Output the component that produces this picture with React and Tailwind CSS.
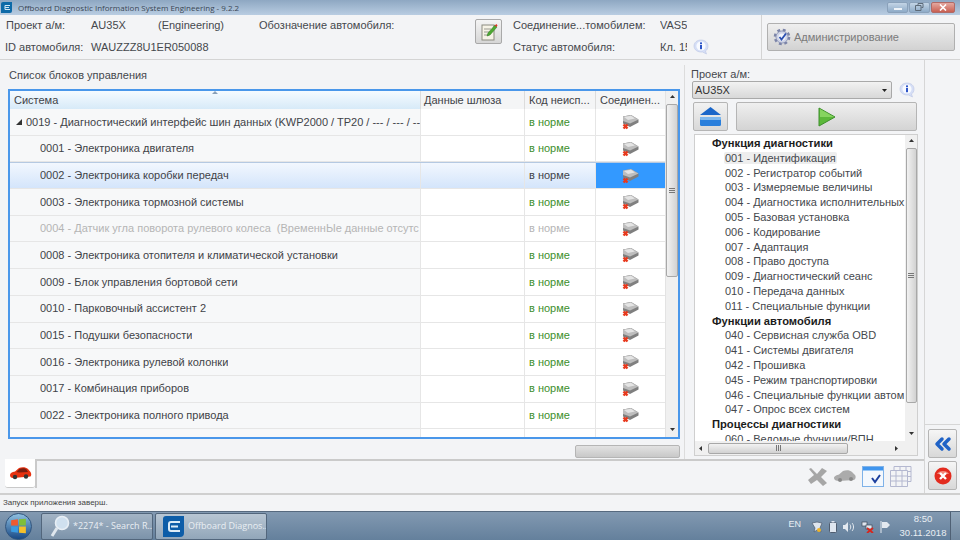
import { ChevronsLeft } from 'lucide-react';

const rows = [
  { name: '0019 - Диагностический интерфейс шин данных (KWP2000 / TP20 / --- / --- / ---', root: true },
  { name: '0001 - Электроника двигателя' },
  { name: '0002 - Электроника коробки передач', selected: true },
  { name: '0003 - Электроника тормозной системы' },
  { name: '0004 - Датчик угла поворота рулевого колеса  (ВременнЫе данные отсутс', disabled: true },
  { name: '0008 - Электроника отопителя и климатической установки' },
  { name: '0009 - Блок управления бортовой сети' },
  { name: '0010 - Парковочный ассистент 2' },
  { name: '0015 - Подушки безопасности' },
  { name: '0016 - Электроника рулевой колонки' },
  { name: '0017 - Комбинация приборов' },
  { name: '0022 - Электроника полного привода' },
  { name: '', partial: true },
];

const tree = [
  { label: 'Функция диагностики', bold: true },
  { label: '001 - Идентификация', active: true },
  { label: '002 - Регистратор событий' },
  { label: '003 - Измеряемые величины' },
  { label: '004 - Диагностика исполнительных' },
  { label: '005 - Базовая установка' },
  { label: '006 - Кодирование' },
  { label: '007 - Адаптация' },
  { label: '008 - Право доступа' },
  { label: '009 - Диагностический сеанс' },
  { label: '010 - Передача данных' },
  { label: '011 - Специальные функции' },
  { label: 'Функции автомобиля', bold: true },
  { label: '040 - Сервисная служба OBD' },
  { label: '041 - Системы двигателя' },
  { label: '042 - Прошивка' },
  { label: '045 - Режим транспортировки' },
  { label: '046 - Специальные функции автом' },
  { label: '047 - Опрос всех систем' },
  { label: 'Процессы диагностики', bold: true },
  { label: '060 - Ведомые функции/ВПН' },
];

function InfoIcon() {
  return (
    <svg width="16" height="16" viewBox="0 0 16 16">
      <path d="M8 1c4 0 7 2.500 7 6 0 2.500-1 4-2.500 5l1 3-4-2C5 13.500 1 11 1 7c0-3.500 3-6 7-6z" fill="#d5def6" stroke="#bcc6e4" strokeWidth=".6" />
      <circle cx="8" cy="7" r="4.600" fill="#f8faff" />
      <rect x="7" y="5.800" width="2" height="4.400" fill="#2d55c8" />
      <rect x="7" y="3.400" width="2" height="1.600" fill="#2d55c8" />
    </svg>
  );
}

function DriveIcon() {
  return (
    <svg width="17" height="16" viewBox="0 0 17 16">
      <path d="M1 2.500 9 1 16.500 5.500v3L8 13 1 9.500z" fill="#7f7f7f" />
      <path d="M1 2.500 9 1 16.500 5.500 8 9.500 1 7z" fill="#bdbdbd" />
      <path d="M2 3 9 1.800l4 2.700L6 6z" fill="#e4e4e4" />
      <path d="M1.500 10.500l4 4M5.500 10.500l-4 4" stroke="#e8391d" strokeWidth="2.400" />
    </svg>
  );
}

function EditIcon() {
  return (
    <svg width="20" height="20" viewBox="0 0 20 20">
      <rect x="3" y="3" width="12" height="15" fill="#f6f3e6" stroke="#8b8b80" />
      <path d="M5 7h7M5 10h6M5 13h5" stroke="#9a9a90" />
      <path d="M8 14l1-3 7-8 2 2-7 8z" fill="#4da832" stroke="#2f7a1e" strokeWidth=".5" />
      <path d="M15.500 3.500l2-1.500 1 1.500-1 1.500z" fill="#d83a2a" />
    </svg>
  );
}

function GearIcon() {
  return (
    <svg width="20" height="20" viewBox="0 0 20 20">
      <circle cx="10" cy="10" r="6.500" fill="#b9c0d6" stroke="#7b84a8" strokeWidth="3.600" strokeDasharray="2.600 2.500" />
      <circle cx="10" cy="10" r="6" fill="#cfd4e6" stroke="#8088aa" strokeWidth=".6" />
      <circle cx="10" cy="10" r="3.500" fill="#f2f4fb" />
      <path d="M7.500 10l2 2.500L14 6.500" fill="none" stroke="#2a4fb0" strokeWidth="1.800" />
    </svg>
  );
}

function ScrollArrow({ dir }) {
  const d = { up: 'M1 4 3.500 1 6 4z', down: 'M1 1h5L3.500 4z', left: 'M4 1v5L1 3.500z', right: 'M1 1v5l3-2.500z' }[dir];
  return (
    <svg width="7" height="7" viewBox="0 0 7 7">
      <path d={d} fill="#333" />
    </svg>
  );
}

function Grip({ horizontal }) {
  return horizontal ? (
    <div className="flex gap-[1px]">
      <div className="w-[1px] h-[6px] bg-[#777]" />
      <div className="w-[1px] h-[6px] bg-[#777]" />
      <div className="w-[1px] h-[6px] bg-[#777]" />
    </div>
  ) : (
    <div className="flex flex-col gap-[1px]">
      <div className="w-[6px] h-[1px] bg-[#777]" />
      <div className="w-[6px] h-[1px] bg-[#777]" />
      <div className="w-[6px] h-[1px] bg-[#777]" />
    </div>
  );
}

function TableRow({ row }) {
  const textColor = row.disabled ? 'text-[#b5b5b5]' : 'text-[#3f4348]';
  const statusColor = row.selected ? 'text-[#3f4348]' : row.disabled ? 'text-[#b5b5b5]' : 'text-[#3d8f2c]';
  return (
    <div className={`flex shrink-0 h-[26.7px] border-b border-[#e6e6e6] ${row.selected ? 'bg-gradient-to-b from-[#f2f7fe] to-[#d4e5fb] border-t border-t-[#b5c9e2]' : ''}`}>
      <div className={`w-[410px] shrink-0 flex items-center overflow-hidden whitespace-pre ${row.root ? 'pl-[6px] gap-[4px]' : 'pl-[30px]'} ${row.selected ? '' : 'bg-[#f7f8f9]'} ${textColor}`}>
        {row.root && (
          <svg width="6" height="6" viewBox="0 0 6 6" className="shrink-0">
            <path d="M0 6h6V0z" fill="#333" />
          </svg>
        )}
        <span className="overflow-hidden">{row.name}</span>
      </div>
      <div className="w-[104px] shrink-0 border-l border-[#e6e6e6]" />
      <div className={`w-[71px] shrink-0 border-l border-[#e6e6e6] flex items-center pl-[4px] ${statusColor}`}>
        {!row.partial && 'в норме'}
      </div>
      <div className={`w-[70px] shrink-0 border-l border-[#e6e6e6] flex items-center justify-center ${row.selected ? 'bg-[#3399ff]' : ''}`}>
        {!row.partial && <DriveIcon />}
      </div>
    </div>
  );
}

function ControlList() {
  return (
    <div className="h-[350px] ml-[8px] mr-[4px] border-2 border-[#4a97ea] flex overflow-hidden bg-white">
      <div className="w-[655px] shrink-0 flex flex-col overflow-hidden">
        <div className="relative flex shrink-0 h-[18px] bg-gradient-to-b from-[#f6fbff] to-[#d7eaf8] text-[#3f4348]">
          <div className="w-[410px] shrink-0 pl-[4px] pt-[1px] flex items-center">Система</div>
          <svg width="6" height="3" viewBox="0 0 6 3" className="absolute left-[202px] top-0">
            <path d="M0 3 3 0 6 3z" fill="#8aa0b8" />
          </svg>
          <div className="w-[104px] shrink-0 bg-[#f4f5f6] border-l border-[#dcdcdc] pl-[3px] pt-[1px] flex items-center">Данные шлюза</div>
          <div className="w-[71px] shrink-0 bg-[#f4f5f6] border-l border-[#dcdcdc] pl-[4px] pt-[1px] flex items-center">Код неисп...</div>
          <div className="w-[70px] shrink-0 bg-[#f4f5f6] border-l border-[#dcdcdc] pl-[4px] pt-[1px] flex items-center">Соединен...</div>
        </div>
        {rows.map((row, i) => (
          <TableRow key={i} row={row} />
        ))}
      </div>
      <div className="flex-1 bg-[#f0f0f0] flex flex-col items-center border-l border-[#e3e3e3]">
        <div className="h-[13px] flex items-center justify-center"><ScrollArrow dir="up" /></div>
        <div className="w-[12px] h-[173px] rounded-[2px] border border-[#a8a8a8] bg-gradient-to-r from-[#f2f2f2] to-[#d2d2d2] flex items-center justify-center">
          <Grip />
        </div>
        <div className="mt-auto h-[14px] flex items-center justify-center"><ScrollArrow dir="down" /></div>
      </div>
    </div>
  );
}

function DiagTree() {
  return (
    <div className="h-[322px] mt-[3px] ml-[9px] mr-[6px] border border-[#cfcfcf] bg-white flex flex-col overflow-hidden">
      <div className="flex flex-1 min-h-0">
        <div className="w-[210px] shrink-0 pt-[1px] overflow-hidden whitespace-nowrap">
          {tree.map(item => (
            <div
              key={item.label}
              className={`h-[14.800px] leading-[15px] ${item.bold ? 'pl-[17px] font-bold text-[11.200px] text-[#1c1c1c]' : 'pl-[30px] text-[#45484d]'}`}
            >
              <span className={item.active ? 'bg-[#eeeeee] rounded-[2px] px-[1px] -mx-[1px]' : ''}>{item.label}</span>
            </div>
          ))}
        </div>
        <div className="flex-1 bg-[#f0f0f0] flex flex-col items-center">
          <div className="h-[13px] flex items-center justify-center"><ScrollArrow dir="up" /></div>
          <div className="w-[11px] h-[255px] rounded-[2px] border border-[#a8a8a8] bg-gradient-to-r from-[#f2f2f2] to-[#d2d2d2] flex items-center justify-center">
            <Grip />
          </div>
          <div className="mt-auto h-[14px] flex items-center justify-center"><ScrollArrow dir="down" /></div>
        </div>
      </div>
      <div className="h-[14px] shrink-0 bg-[#f0f0f0] flex items-center">
        <div className="w-[13px] flex justify-center"><ScrollArrow dir="left" /></div>
        <div className="w-[140px] h-[11px] rounded-[2px] border border-[#a8a8a8] bg-gradient-to-b from-[#f2f2f2] to-[#d2d2d2] flex items-center justify-center">
          <Grip horizontal />
        </div>
        <div className="ml-auto w-[13px] mr-[13px] flex justify-center"><ScrollArrow dir="right" /></div>
      </div>
    </div>
  );
}

function RightPanel() {
  return (
    <div className="w-[240px] shrink-0 border-l border-[#dcdcdc] mt-[5px] flex flex-col">
      <div className="pl-[6px] h-[16px] flex items-center mt-[1px] text-[#45484d]">Проект а/м:</div>
      <div className="flex items-center mt-[-1px]">
        <div className="ml-[7px] w-[200px] h-[18px] rounded-[2px] border border-[#a9a9a9] bg-gradient-to-b from-[#f2f2f2] to-[#d8d8d8] flex items-center justify-between pl-[2px] pr-[4px] text-[#333]">
          AU35X
          <svg width="5" height="3" viewBox="0 0 5 3"><path d="M0 0h5L2.500 3z" fill="#222" /></svg>
        </div>
        <div className="ml-[7px]"><InfoIcon /></div>
      </div>
      <div className="flex mt-[3px] ml-[8px] gap-[8px]">
        <div className="w-[35px] h-[29px] rounded-[2px] border border-[#b5b5b5] bg-gradient-to-b from-[#f2f2f2] to-[#d8d8d8] flex items-center justify-center">
          <svg width="21" height="19" viewBox="0 0 21 19">
            <path d="M10.500 0 21 8H0z" fill="#1a66c9" />
            <rect y="10" width="21" height="9" rx="1.500" fill="#2a7fdc" />
            <rect y="10" width="21" height="3" rx="1" fill="#7db7ee" />
          </svg>
        </div>
        <div className="w-[181px] h-[29px] rounded-[2px] border border-[#b5b5b5] bg-gradient-to-b from-[#efefef] to-[#d4d4d4] flex items-center justify-center">
          <svg width="18" height="20" viewBox="0 0 18 20">
            <path d="M1 1 17 10 1 19z" fill="#5cb83a" stroke="#3d8f2c" strokeLinejoin="round" />
            <path d="M2 2 16 10H2z" fill="#86d45f" />
          </svg>
        </div>
      </div>
      <DiagTree />
    </div>
  );
}

function BottomTools() {
  return (
    <div className="h-[34px] shrink-0 flex">
      <div className="w-[35px] shrink-0 pl-[5px] pb-[5px]">
        <div className="h-full bg-white rounded-b-[3px] border-b border-[#c9c9c9] flex items-center justify-center">
          <svg width="23" height="14" viewBox="0 0 23 14">
            <path d="M1 9c0-2 2-3 5-3.500L10 2c3-1.500 7-1 9 1l2.500 3c1 1.500 1 3.500 0 4.500L4 12C2 12 1 11 1 9z" fill="#e8310f" />
            <path d="M10.500 3c2.500-1 5.500-1 7 .5l1.500 2.500-9 .5-2.500-.5z" fill="#7a1d10" />
            <circle cx="6" cy="11" r="2.200" fill="#333" />
            <circle cx="17" cy="10.500" r="2.200" fill="#333" />
          </svg>
        </div>
      </div>
      <div className="flex-1 border-t-2 border-l-2 border-[#cacaca] mb-[5px] flex items-center justify-end gap-[6px] pr-[12px] pt-[4px]">
        <svg width="21" height="20" viewBox="0 0 21 20">
          <path d="M4 1 10 7 15 1l5 3-6 6 6 6-4 3-6-6-6 4-3-4 6-5-5-6z" fill="#a6a6a6" />
        </svg>
        <svg width="22" height="13" viewBox="0 0 22 13">
          <path d="M0 8c0-2 3-3 5-3.500L9 1c3-1 7-1 9 1l3 3c1 1 1 4-1 5L5 11C2 11 0 10 0 8z" fill="#ababab" />
          <circle cx="6" cy="10" r="2" fill="#888" />
          <circle cx="17" cy="9" r="2" fill="#888" />
        </svg>
        <svg width="22" height="21" viewBox="0 0 22 21">
          <rect x=".5" y=".5" width="21" height="20" fill="#f4f8fd" stroke="#7fb2e8" />
          <rect x="1" y="1" width="20" height="3.500" fill="#3f95ee" />
          <path d="M10 12l3 4 5-7" fill="none" stroke="#1c3f9e" strokeWidth="2" />
        </svg>
        <svg width="22" height="21" viewBox="0 0 22 21" fill="none" stroke="#b4b8d0">
          <path d="M.5 4.500h17v16H.5zM6 4.500v16M12 4.500v16M.5 10h17M.5 15h17M4 4.500V.5h17v15h-3.500M10 .5v4M16 .5v4M18 5.500h3M18 10.500h3" />
        </svg>
      </div>
    </div>
  );
}

function SideStrip() {
  return (
    <div className="flex-1 flex flex-col justify-end border-l border-[#d6d6d6]">
      <div className="h-[73px] border-t border-[#d6d6d6] pl-[3px] pt-[4px] flex flex-col gap-[3px] mb-[-4px]">
        <div className="w-[29px] h-[29px] rounded-[2px] border border-[#b5b5b5] bg-gradient-to-b from-[#f6f6f6] to-[#d8d8d8] flex items-center justify-center">
          <ChevronsLeft size={24} strokeWidth={3.500} className="text-[#1f62c6]" />
        </div>
        <div className="w-[29px] h-[29px] rounded-[2px] border border-[#b5b5b5] bg-gradient-to-b from-[#f6f6f6] to-[#d8d8d8] flex items-center justify-center">
          <svg width="18" height="18" viewBox="0 0 18 18">
            <circle cx="9" cy="9" r="8.500" fill="#e32b1e" />
            <path d="M3 7a6.500 5 0 0 1 12 0z" fill="#f28a7c" />
            <path d="M6 6l6 6M12 6l-6 6" stroke="#fff" strokeWidth="2.400" />
          </svg>
        </div>
      </div>
    </div>
  );
}

function Taskbar() {
  return (
    <div className="h-[29px] shrink-0 bg-gradient-to-b from-[#8299b1] to-[#64809c] border-t border-[#56697e] flex items-center text-[#e9eef3]">
      <div className="ml-[5px] w-[27px] h-[27px] rounded-full bg-gradient-to-b from-[#8fc0e0] to-[#184a86] border border-[#30547d] flex items-center justify-center">
        <svg width="17" height="16" viewBox="0 0 15 14">
          <path d="M1 2 7 1v5.500H1z" fill="#ee5a30" />
          <path d="M8 1l6-.500v6H8z" fill="#7fbf3a" />
          <path d="M1 7.500h6V13l-6-1z" fill="#3a9be0" />
          <path d="M8 7.500h6v6L8 13z" fill="#f5c02a" />
        </svg>
      </div>
      <div className="ml-[9px] w-[112px] h-[27px] rounded-[2px] border border-[#52667c] bg-gradient-to-b from-[#a3b4c5] to-[#7c93aa] flex items-center pl-[8px] gap-[3px] text-[9px] whitespace-nowrap overflow-hidden font-['Open_Sans','Liberation_Sans',sans-serif]">
        <svg width="20" height="24" viewBox="0 0 20 24" className="shrink-0">
          <circle cx="12" cy="9" r="6.500" fill="#cfe0ef" stroke="#e7eef5" strokeWidth="1.600" />
          <path d="M7 14 2 22" stroke="#dfe7ee" strokeWidth="3" />
        </svg>
        *2274* - Search R...
      </div>
      <div className="ml-[2px] w-[112px] h-[27px] rounded-[2px] border border-[#52667c] bg-gradient-to-b from-[#b8c6d3] to-[#92a6b9] flex items-center pl-[7px] gap-[4px] text-[9px] whitespace-nowrap overflow-hidden font-['Open_Sans','Liberation_Sans',sans-serif]">
        <svg width="21" height="21" viewBox="0 0 21 21" className="shrink-0">
          <path d="M3 0h18v17a4 4 0 0 1-4 4H0V3a3 3 0 0 1 3-3z" fill="#0d5da8" />
          <path d="M17 6H8a2 2 0 0 0-2 2v5a2 2 0 0 0 2 2h9M8 10.500h7" fill="none" stroke="#dcecf8" strokeWidth="2" />
        </svg>
        Offboard Diagnos...
      </div>
      <div className="ml-auto flex items-center h-full">
        <span className="text-[9px] mr-[10px] mb-[3px]">EN</span>
        <div className="flex items-center gap-[6px] mr-[7px] mt-[2px]">
          <svg width="12" height="12" viewBox="0 0 12 12">
            <path d="M1 2l5-1 5 1-2 5 1 4-4-2-3 2 1-4z" fill="#dfe6ef" stroke="#4f5d70" strokeWidth=".7" />
            <circle cx="8" cy="9" r="2" fill="#f0b428" />
          </svg>
          <svg width="8" height="12" viewBox="0 0 8 12">
            <rect x=".5" y="1.500" width="7" height="10" rx="1" fill="#dfe6ef" stroke="#4f5d70" />
            <rect x="2.500" y="0" width="3" height="1.500" fill="#dfe6ef" />
          </svg>
          <svg width="12" height="12" viewBox="0 0 12 12">
            <path d="M0 4h2l3-3v10L2 8H0z" fill="#e3e9f0" />
            <path d="M7 3.500c1 1.500 1 3.500 0 5M9 2c2 2 2 6 0 8" fill="none" stroke="#e3e9f0" />
          </svg>
          <svg width="13" height="12" viewBox="0 0 13 12">
            <rect x="1" y="1" width="5" height="4" fill="#dfe6ef" stroke="#3f4c5c" strokeWidth=".7" />
            <rect x="5" y="4" width="6" height="4" fill="#dfe6ef" stroke="#3f4c5c" strokeWidth=".7" />
            <path d="M6 7l6 5M12 7l-6 5" stroke="#d8261c" strokeWidth="1.800" />
          </svg>
          <svg width="11" height="12" viewBox="0 0 11 12">
            <path d="M1 0v12" stroke="#e3e9f0" />
            <path d="M2 1h5l3 3-3 3H2z" fill="#e3e9f0" />
          </svg>
        </div>
        <div className="w-[50px] text-center text-[9.500px] leading-[14px]">
          <div>8:50</div>
          <div>30.11.2018</div>
        </div>
        <div className="ml-[2px] w-[10px] h-full border-l border-[#4f6074] bg-gradient-to-b from-[#93a8bc] to-[#71889f]" />
      </div>
    </div>
  );
}

export default function App() {
  return (
    <div className="w-[960px] h-[540px] overflow-hidden flex flex-col bg-[#f3f4f6] text-[11px] text-[#45484d] font-['Liberation_Sans',Arial,sans-serif]">
      {/* title bar */}
      <div className="h-[15px] shrink-0 bg-gradient-to-b from-[#8ea7c2] to-[#b9cde2] flex items-center text-[#3a4654] text-[8px]">
        <svg width="11" height="11" viewBox="0 0 11 11" className="ml-[1px]">
          <path d="M2 0h9v9a2 2 0 0 1-2 2H0V2a2 2 0 0 1 2-2z" fill="#0d6aa8" />
          <path d="M9 3.500H4v4h5M4 5.500h4" fill="none" stroke="#cfe6f5" />
        </svg>
        <span className="ml-[6px] font-['Open_Sans','Liberation_Sans',sans-serif]">Offboard Diagnostic Information System Engineering - 9.2.2</span>
        <div className="ml-auto flex gap-[1px] mr-[5px] mt-[-1px]">
          <div className="w-[21px] h-[11px] rounded-[2px] border border-[#8aa1ba] bg-gradient-to-b from-[#c3d4e6] to-[#8eabc7] flex items-center justify-center">
            <div className="w-[8px] h-[2px] mt-[3px] bg-[#eef3f8]" />
          </div>
          <div className="w-[21px] h-[11px] rounded-[2px] border border-[#8aa1ba] bg-gradient-to-b from-[#c3d4e6] to-[#8eabc7] flex items-center justify-center">
            <svg width="9" height="8" viewBox="0 0 9 8" fill="none" stroke="#5d6a78">
              <path d="M3 2V.5h5v4H6.500M.5 2.500h5.500v5H.5z" />
            </svg>
          </div>
          <div className="w-[24px] h-[11px] rounded-[2px] border border-[#b06a66] bg-gradient-to-b from-[#e3a8a0] to-[#c85f52] flex items-center justify-center">
            <svg width="8" height="7" viewBox="0 0 8 7"><path d="M1 .5l6 6M7 .5l-6 6" stroke="#fff" strokeWidth="1.600" /></svg>
          </div>
        </div>
      </div>

      {/* vehicle header */}
      <div className="h-[45px] shrink-0 flex">
        <div className="w-[761px] shrink-0 border-b border-[#d4d4d4] flex">
          <div className="w-[470px] shrink-0 flex flex-col pt-[3px] gap-[7px] whitespace-nowrap">
            <div className="flex h-[14px] items-center pl-[6px]">
              <span className="w-[85px]">Проект а/м:</span>
              <span className="w-[67px]">AU35X</span>
              <span className="w-[101px]">(Engineering)</span>
              <span>Обозначение автомобиля:</span>
            </div>
            <div className="flex h-[14px] items-center pl-[5px] mt-[1px]">
              <span className="w-[86px]">ID автомобиля:</span>
              <span>WAUZZZ8U1ER050088</span>
            </div>
          </div>
          <div className="ml-[5px] mt-[4px] w-[27px] h-[25px] rounded-[2px] border border-[#a9a9a9] bg-gradient-to-b from-[#f4f4f4] to-[#d6d6d6] flex items-center justify-center">
            <EditIcon />
          </div>
          <div className="ml-[11px] flex flex-col pt-[3px] gap-[7px] whitespace-nowrap">
            <div className="flex h-[14px] items-center">
              <span className="w-[147px]">Соединение...томобилем:</span>
              <span className="w-[27px] overflow-hidden">VAS5054</span>
            </div>
            <div className="flex h-[14px] items-center mt-[1px]">
              <span className="w-[147px]">Статус автомобиля:</span>
              <span className="w-[27px] overflow-hidden">Кл. 15</span>
              <span className="ml-[6px]"><InfoIcon /></span>
            </div>
          </div>
        </div>
        <div className="flex-1 border-l border-b border-[#d4d4d4] pl-[5px] pt-[8px]">
          <div className="w-[188px] h-[28px] rounded-[2px] border border-[#b0b0b0] bg-gradient-to-b from-[#efefef] to-[#d2d2d2] flex items-center pl-[4px] gap-[2px] text-[#7b7b7b]">
            <GearIcon />
            Администрирование
          </div>
        </div>
      </div>

      {/* work area */}
      <div className="flex-1 min-h-0 flex">
        <div className="w-[924px] shrink-0 flex flex-col">
          <div className="flex-1 min-h-0 flex">
            <div className="w-[684px] shrink-0 flex flex-col">
              <div className="h-[29px] shrink-0 pl-[9px] pt-[7px] text-[#45484d]">Список блоков управления</div>
              <ControlList />
              <div className="flex justify-end mt-[6px] pr-[4px]">
                <div className="w-[105px] h-[13px] rounded-[2px] border border-[#b5b5b5] bg-gradient-to-b from-[#e2e2e2] to-[#c8c8c8]" />
              </div>
            </div>
            <RightPanel />
          </div>
          <BottomTools />
        </div>
        <SideStrip />
      </div>

      {/* status line */}
      <div className="h-[18px] shrink-0 border-t-2 border-[#cfcfcf] flex items-center pl-[3px] text-[8px] text-[#444]">
        Запуск приложения заверш.
      </div>

      <Taskbar />
    </div>
  );
}
